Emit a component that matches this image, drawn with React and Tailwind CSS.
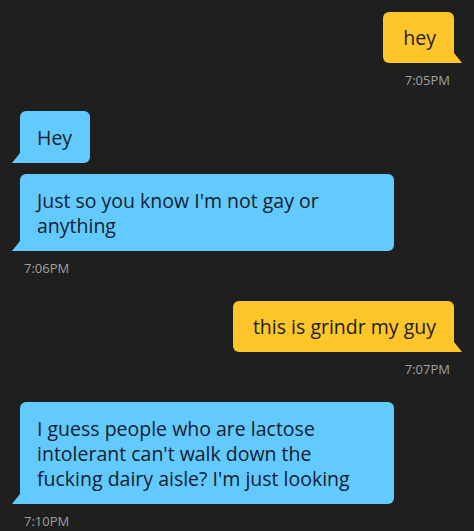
const FONT = { fontFamily: '"Open Sans", "Noto Sans", sans-serif' };

function Tail({ side, color }) {
  // small triangle hanging off the bottom corner of a bubble
  const cls =
    side === 'left'
      ? 'absolute bottom-0 -left-2 w-2 h-[10px]'
      : 'absolute bottom-0 -right-2 w-2 h-[10px]';
  return (
    <svg className={cls} viewBox="0 0 8 10" preserveAspectRatio="none">
      {side === 'left' ? (
        <polygon points="8,0 8,10 0,10" fill={color} />
      ) : (
        <polygon points="0,0 8,10 0,10" fill={color} />
      )}
    </svg>
  );
}

function Sent({ text, time, className = '' }) {
  return (
    <div className={`flex flex-col items-end pr-5 ${className}`}>
      <div className="relative bg-[#ffc629] text-[#1c1c1c] rounded-md rounded-br-none pl-5 pr-[18px] pt-[13px] pb-[13px] text-[19.5px] leading-[25px]">
        {text}
        <Tail side="right" color="#ffc629" />
      </div>
      <div className="mt-2 mr-1 text-[13px] leading-[18px] text-[#a0a0a0]">{time}</div>
    </div>
  );
}

function Received({ lines, time, wide, className = '' }) {
  return (
    <div className={`flex flex-col items-start pl-5 ${className}`}>
      <div
        className={`relative bg-[#62caff] text-[#13202c] rounded-md rounded-bl-none pl-[17px] pr-[18px] pt-[14px] pb-[13px] text-[19.5px] leading-[25px] ${wide ? 'w-[374px]' : ''}`}
      >
        {lines.map((l, i) => (
          <div key={i} className="whitespace-nowrap">{l}</div>
        ))}
        <Tail side="left" color="#62caff" />
      </div>
      {time && <div className="mt-2 ml-1 text-[13px] leading-[18px] text-[#a0a0a0]">{time}</div>}
    </div>
  );
}

export default function App() {
  return (
    <div style={FONT} className="w-[474px] h-[531px] bg-[#1f1f1f] overflow-hidden pt-3">
      <Sent text="hey" time="7:05PM" />
      <Received lines={['Hey']} className="mt-[22px]" />
      <Received
        wide
        lines={["Just so you know I'm not gay or", 'anything']}
        time="7:06PM"
        className="mt-[11px]"
      />
      <Sent text="this is grindr my guy" time="7:07PM" className="mt-6" />
      <Received
        wide
        lines={['I guess people who are lactose', "intolerant can't walk down the", "fucking dairy aisle? I'm just looking"]}
        time="7:10PM"
        className="mt-6"
      />
    </div>
  );
}
